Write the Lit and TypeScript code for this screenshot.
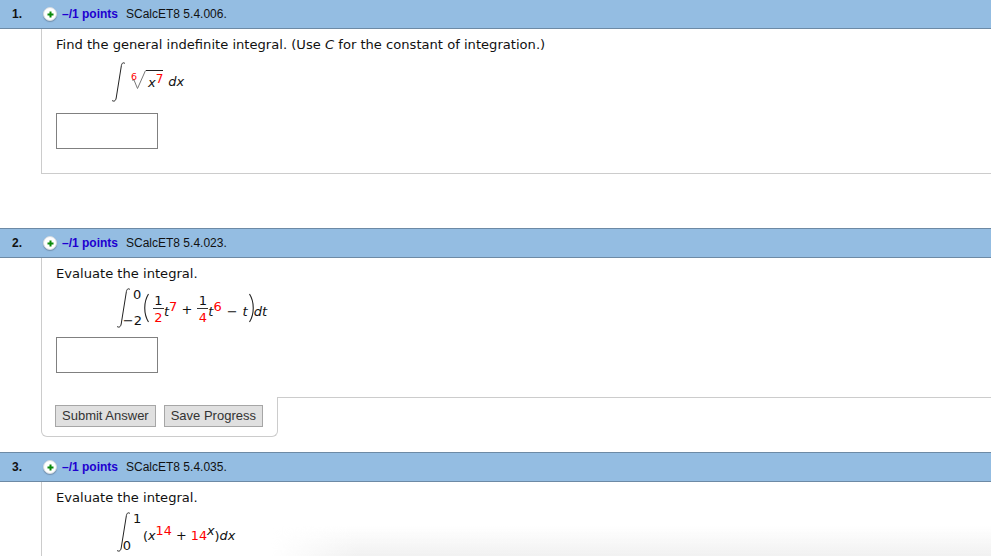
import { LitElement, html, css } from "lit";
import { customElement } from "lit/decorators.js";

const intSign = (h: number) => html`<svg class="int" width="15" height="${h}" viewBox="0 0 15 ${h}"><path d="M14 1.6 C12.6 0.2 11 0.6 10.4 3.5 L5.2 ${h - 4} C4.6 ${h - 0.8} 2.8 ${h - 0.2} 1 ${h - 1.6}" fill="none" stroke="#222" stroke-width="1"/></svg>`;
const paren = (right: boolean) => html`<svg class="pr" width="8" height="30" viewBox="0 0 8 30"><path d="${right ? "M1.5 1 C6.5 9 6.5 21 1.5 29" : "M6.5 1 C1.5 9 1.5 21 6.5 29"}" fill="none" stroke="#222" stroke-width="1.1"/></svg>`;

@customElement("app-root")
export class AppRoot extends LitElement {
  static styles = css`
    :host { display: block; width: 991px; height: 556px; overflow: hidden; position: relative; background: #fff;
      font-family: "DejaVu Sans", sans-serif; color: #111; }
    .bar { display: flex; align-items: center; background: #94bde2; border-bottom: 1px solid #6d8aa5; height: 28px;
      font: 12px "Liberation Sans", sans-serif; color: #111; }
    .bar.t { border-top: 1px solid #6d8aa5; }
    .num { width: 43px; padding-left: 12px; box-sizing: border-box; font-weight: bold; }
    .plus { width: 14px; height: 14px; border-radius: 50%; background: #fff; border: 1px solid #d4dbe1; box-sizing: border-box;
      box-shadow: 0 1px 1px rgba(90,115,140,.6); display: flex; align-items: center; justify-content: center; margin-right: 4px; margin-left: 0; }
    .pts { color: #1e00d0; font-weight: bold; margin-left: 1px; margin-right: 8px; }
    .panel { margin-left: 41px; border-left: 1px solid #ccc; padding-left: 14px; box-sizing: border-box; }
    .p1 { height: 145px; border-bottom: 1px solid #ccc; padding-top: 8px; }
    .gap1 { height: 54px; }
    .p2 { height: 139px; padding-top: 8px; }
    .p3 { height: 74px; padding-top: 8px; }
    .q { font-size: 13.1px; line-height: 16px; white-space: nowrap; }
    i { font-style: italic; }
    .math { display: flex; margin-left: 55px; font-size: 13px; white-space: nowrap; height: 40px; align-items: center; }
    .m1 { margin-top: 9px; margin-bottom: 11px; }
    .m2 { margin-left: 60px; margin-top: 6px; margin-bottom: 9px; }
    .m3 { margin-left: 60px; margin-top: 6px; }
    .int { display: block; flex: none; }
    .pr { display: block; }
    .r { color: #f00; }
    .ans { width: 102px; height: 36px; border: 1px solid #808080; box-sizing: border-box; display: block; background: #fff; }
    .lims { position: relative; width: 11px; height: 40px; flex: none; }
    .hi { position: absolute; left: 2px; top: 0; font-size: 13px; line-height: 14px; }
    .lo { position: absolute; right: 0; bottom: 0; font-size: 13px; line-height: 14px; }
    .m3 .lo { right: 11px; bottom: -1px; }
    .expr { display: inline-flex; align-items: center; }
    .frac { display: inline-flex; flex-direction: column; align-items: center; font-size: 13px; line-height: 13px; width: 11px; margin: 0 0 0 3px; position: relative; top: 1px; }
    .frac b { font-weight: normal; border-bottom: 1px solid #333; width: 100%; text-align: center; padding-bottom: 1px; margin-bottom: 2px; }
    .tt { display: inline-block; position: relative; top: 3px; }
    sup { font-size: 13px; line-height: 0; vertical-align: 5px; }
    .radical { display: flex; align-items: flex-start; position: relative; margin-left: 5px; align-self: flex-start; margin-top: 8px; }
    .idx { font-size: 9.5px; color: #f00; position: absolute; left: 0; top: 1px; line-height: 12px; }
    .under { border-top: 1px solid #222; line-height: 24px; padding: 0 0 0 2px; height: 20px; box-sizing: border-box; }
    .under sup { font-size: 12px; vertical-align: 4px; }
    .dx { margin-left: 5px; position: relative; top: -1px; }
    .plusop { margin: 0 2px 0 4px; position: relative; top: 1px; }
    .minus { margin: 0 5px; }
    .btnrow { display: flex; height: 40px; }
    .btns { width: 237px; margin-left: 41px; box-sizing: border-box; height: 40px; border: 1px solid #ccc; border-top: 0; border-radius: 0 0 6px 6px;
      display: flex; gap: 8px; padding: 8px 0 0 13px; }
    .fill { flex: 1; border-top: 1px solid #ccc; }
    .btn { height: 22px; box-sizing: border-box; border: 1px solid #a6a6a6; background: #e0e0e0; color: #333; font: 13px "Liberation Sans", sans-serif;
      padding: 0 6px; line-height: 20px; white-space: nowrap; }
    .gap2 { height: 15px; }
    .tail { margin-left: 1px; position: relative; top: 3px; font-size: 12.8px; }
    .tail sup { font-size: 12.8px; }
    .prr { margin-right: -2px; display: flex; }
    .shade { position: absolute; right: 0; bottom: 0; width: 720px; height: 30px; pointer-events: none;
      background: linear-gradient(to bottom, rgba(240,240,240,0), rgba(240,240,240,.9)); -webkit-mask-image: linear-gradient(to right, transparent, #000 12%); mask-image: linear-gradient(to right, transparent, #000 12%); }
  `;

  private head(n: string, code: string, top: boolean) {
    return html`<div class="bar ${top ? "t" : ""}">
      <span class="num">${n}</span>
      <span class="plus"><svg width="7" height="7" viewBox="0 0 7 7"><path d="M3.5 0.5v6M0.5 3.5h6" stroke="#0a8a0a" stroke-width="2"/></svg></span>
      <span class="pts">–/1 points</span><span>${code}</span>
    </div>`;
  }

  render() {
    return html`
      ${this.head("1.", "SCalcET8 5.4.006.", false)}
      <div class="panel p1">
        <div class="q">Find the general indefinite integral. (Use <i>C</i> for the constant of integration.)</div>
        <div class="math m1">
          ${intSign(40)}
          <span class="radical">
            <span class="idx">6</span>
            <svg width="15" height="20" viewBox="0 0 15 20" style="display:block"><path d="M1 10l2 0l3.5 8.5L14.5 0.5" fill="none" stroke="#777" stroke-width="1"/></svg>
            <span class="under"><i>x</i><sup class="r">7</sup></span>
          </span>
          <span class="dx"><i>dx</i></span>
        </div>
        <div class="ans"></div>
      </div>
      <div class="gap1"></div>
      ${this.head("2.", "SCalcET8 5.4.023.", true)}
      <div class="panel p2">
        <div class="q">Evaluate the integral.</div>
        <div class="math m2">
          ${intSign(40)}
          <span class="lims"><span class="hi">0</span><span class="lo">−2</span></span>
          <span class="expr">
            ${paren(false)}
            <span class="frac"><b>1</b><span class="r">2</span></span>
            <span class="tt"><i>t</i><sup class="r">7</sup></span>
            <span class="plusop">+</span>
            <span class="frac"><b>1</b><span class="r">4</span></span>
            <span class="tt"><i>t</i><sup class="r">6</sup></span>
            <span class="tt minus">−</span><span class="tt"><i>t</i></span>
            <span class="prr">${paren(true)}</span><span class="tt"><i>dt</i></span>
          </span>
        </div>
        <div class="ans"></div>
      </div>
      <div class="btnrow">
        <div class="btns"><span class="btn">Submit Answer</span><span class="btn">Save Progress</span></div>
        <div class="fill"></div>
      </div>
      <div class="gap2"></div>
      ${this.head("3.", "SCalcET8 5.4.035.", true)}
      <div class="panel p3">
        <div class="q">Evaluate the integral.</div>
        <div class="math m3">
          ${intSign(40)}
          <span class="lims"><span class="hi">1</span><span class="lo">0</span></span>
          <span class="tail">(<i>x</i><sup class="r">14</sup> + <span class="r">14</span><sup><i>x</i></sup>)<i>dx</i></span>
        </div>
      </div>
      <div class="shade"></div>
    `;
  }
}
